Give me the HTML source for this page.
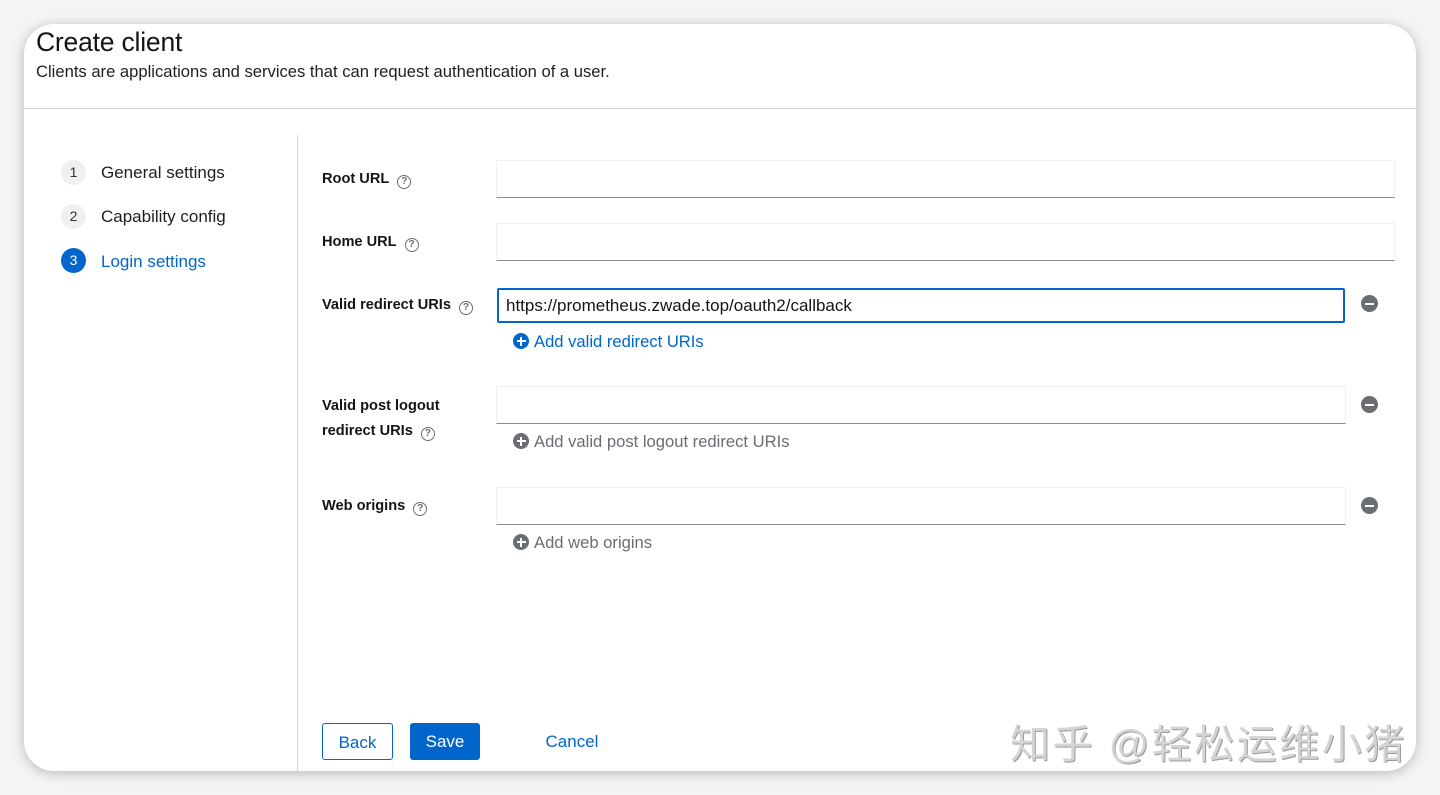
<!DOCTYPE html>
<html><head><meta charset="utf-8"><style>
*{box-sizing:border-box;margin:0;padding:0}
body{width:1440px;height:795px;background:#f4f4f4;font-family:"Liberation Sans","Noto Sans CJK SC",sans-serif;color:#151515;position:relative;overflow:hidden}
.card{position:absolute;left:24px;top:24px;width:1392px;height:747px;background:#fff;border-radius:30px;box-shadow:0 2px 12px rgba(0,0,0,.25);overflow:hidden}
.abs{position:absolute}
.h1{left:12px;top:3px;font-size:26.5px;letter-spacing:-.2px}
.sub{left:12px;top:38px;font-size:16.6px;color:#1f1f1f}
.hr{left:0;top:84px;width:1392px;height:1px;background:#d2d2d2}
.vr{left:273px;top:111px;width:1px;height:640px;background:#d2d2d2}
.step{left:37px;width:25px;height:25px;border-radius:50%;background:#f0f0f0;font-size:14px;text-align:center;line-height:25px;color:#333}
.stxt{left:77px;font-size:17px;color:#1f1f1f}
.lbl{left:298px;font-size:14.6px;font-weight:bold}
.q{display:inline-block;width:14px;height:14px;border:1.3px solid #6a6e73;border-radius:50%;font-size:10px;text-align:center;line-height:12px;color:#6a6e73;font-weight:bold;margin-left:8px;vertical-align:-1px}
.inp{border:1px solid #f0f0f0;border-bottom:1px solid #8a8d90;background:#fff}
.minus{width:17px;height:17px;border-radius:50%;background:#6a6e73}
.minus:after{content:"";position:absolute;left:4px;top:7.5px;width:9px;height:2px;background:#fff}
.add{left:489px;font-size:16.6px;color:#6a6e73}
.plus{display:inline-block;position:relative;width:16px;height:16px;border-radius:50%;background:#6a6e73;vertical-align:-2px;margin-right:5px}
.plus:before{content:"";position:absolute;left:3.5px;top:7px;width:9px;height:2px;background:#fff}
.plus:after{content:"";position:absolute;left:7px;top:3.5px;width:2px;height:9px;background:#fff}
.btn{height:37px;border-radius:3px;font-size:17px;text-align:center;line-height:37px}
</style></head><body>
<div class="card">
<div class="abs h1">Create client</div>
<div class="abs sub">Clients are applications and services that can request authentication of a user.</div>
<div class="abs hr"></div>
<div class="abs vr"></div>
<div class="abs step" style="top:136px">1</div><div class="abs stxt" style="top:139px">General settings</div>
<div class="abs step" style="top:180px">2</div><div class="abs stxt" style="top:183px">Capability config</div>
<div class="abs step" style="top:224px;background:#0066cc;color:#fff">3</div><div class="abs stxt" style="top:228px;color:#0066cc">Login settings</div>

<div class="abs lbl" style="top:147px">Root URL<span class="q">?</span></div>
<div class="abs inp" style="left:472px;top:136px;width:899px;height:38px"></div>
<div class="abs lbl" style="top:210px">Home URL<span class="q">?</span></div>
<div class="abs inp" style="left:472px;top:199px;width:899px;height:38px"></div>

<div class="abs lbl" style="top:273px">Valid redirect URIs<span class="q">?</span></div>
<div class="abs" style="left:473px;top:264px;width:848px;height:35px;border:2px solid #0066cc;border-radius:2px;font-size:17px;line-height:31px;padding-left:7px">https://prometheus.zwade.top/oauth2/callback</div>
<div class="abs minus" style="left:1337px;top:271px"></div>
<div class="abs add" style="top:308px;color:#0066cc"><span class="plus" style="background:#0066cc"></span>Add valid redirect URIs</div>

<div class="abs lbl" style="top:370px;line-height:25px">Valid post logout<br>redirect URIs<span class="q">?</span></div>
<div class="abs inp" style="left:472px;top:362px;width:850px;height:38px"></div>
<div class="abs minus" style="left:1337px;top:372px"></div>
<div class="abs add" style="top:408px"><span class="plus"></span>Add valid post logout redirect URIs</div>

<div class="abs lbl" style="top:474px">Web origins<span class="q">?</span></div>
<div class="abs inp" style="left:472px;top:463px;width:850px;height:38px"></div>
<div class="abs minus" style="left:1337px;top:473px"></div>
<div class="abs add" style="top:509px"><span class="plus"></span>Add web origins</div>

<div class="abs btn" style="left:298px;top:699px;width:71px;border:1px solid #0066cc;color:#0066cc">Back</div>
<div class="abs btn" style="left:386px;top:699px;width:70px;background:#0066cc;color:#fff">Save</div>
<div class="abs btn" style="left:513px;top:699px;width:70px;color:#0066cc">Cancel</div>
<div class="abs" style="left:986px;top:688px;font-size:40px;color:#d4d4d4;letter-spacing:2.5px;white-space:nowrap;text-shadow:1px 1px 0 #9a9a9a">知乎 @轻松运维小猪</div>
</div>
</body></html>
